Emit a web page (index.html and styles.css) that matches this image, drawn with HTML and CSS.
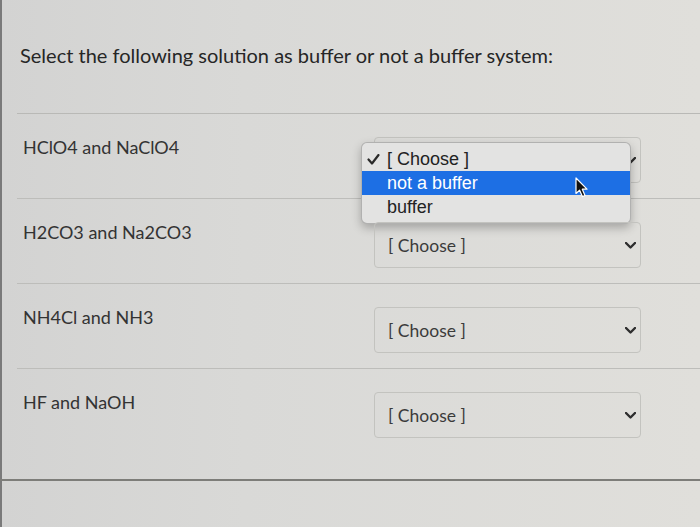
FILE: index.html
```html
<!DOCTYPE html>
<html lang="en">
<head>
  <meta charset="UTF-8" />
  <meta name="viewport" content="width=device-width, initial-scale=1.0" />
  <title>Buffer Systems Quiz</title>
  <link rel="stylesheet" href="styles.css">
</head>
<body>

  <div class="question">
    <h2 class="question-text">Select the following solution as buffer or not a buffer system:</h2>

    <div class="answers">
      <div class="answer-row">
        <span class="answer-label">HClO4 and NaClO4</span>
        <div class="select-wrap open">
          <div class="select-box">
            <span class="select-value">[ Choose ]</span>
            <svg class="chevron" width="11" height="7" viewBox="0 0 11 7"><polyline points="1,1 5.5,5.5 10,1" /></svg>
          </div>

          <!-- open option list for the first select -->
          <ul class="option-menu">
            <li class="option checked">
              <svg class="check" width="13" height="11" viewBox="0 0 13 11"><polyline points="1.5,5.5 5,9.5 11.5,1" /></svg>
              [ Choose ]
            </li>
            <li class="option hover">not a buffer</li>
            <li class="option">buffer</li>
            <svg class="cursor" width="14" height="21" viewBox="0 0 14 21">
              <path d="M1 1 L1 16.5 L4.6 13.2 L7.4 19.6 L10 18.5 L7.3 12.2 L12 12.2 Z" />
            </svg>
          </ul>
        </div>
      </div>

      <div class="answer-row">
        <span class="answer-label">H2CO3 and Na2CO3</span>
        <div class="select-wrap">
          <div class="select-box">
            <span class="select-value">[ Choose ]</span>
            <svg class="chevron" width="11" height="7" viewBox="0 0 11 7"><polyline points="1,1 5.5,5.5 10,1" /></svg>
          </div>
        </div>
      </div>

      <div class="answer-row">
        <span class="answer-label">NH4Cl and NH3</span>
        <div class="select-wrap">
          <div class="select-box">
            <span class="select-value">[ Choose ]</span>
            <svg class="chevron" width="11" height="7" viewBox="0 0 11 7"><polyline points="1,1 5.5,5.5 10,1" /></svg>
          </div>
        </div>
      </div>

      <div class="answer-row last">
        <span class="answer-label">HF and NaOH</span>
        <div class="select-wrap">
          <div class="select-box">
            <span class="select-value">[ Choose ]</span>
            <svg class="chevron" width="11" height="7" viewBox="0 0 11 7"><polyline points="1,1 5.5,5.5 10,1" /></svg>
          </div>
        </div>
      </div>
    </div>

    <div class="question-end"></div>
  </div>

</body>
</html>
```

FILE: styles.css
```css
* {
  margin: 0;
  padding: 0;
  box-sizing: border-box;
}

html, body {
  height: 100%;
}

body {
  font-family: Lato, "Open Sans", sans-serif;
  color: #333;
  background: linear-gradient(90deg, #d3d3d2 0%, #d9d9d7 35%, #e0dfdb 100%);
  overflow: hidden;
}

.question {
  height: 100%;
  border-left: 2px solid #7a7a7a;
}

.question-text {
  font-size: 20px;
  font-weight: normal;
  line-height: 26px;
  color: #262626;
  padding: 42px 0 0 18px;
  height: 113px;
}

.answers {
  margin-left: 15px;
  border-top: 1px solid #b9b9b6;
}

.answer-row {
  display: flex;
  align-items: flex-start;
  height: 85px;
  padding-top: 23px;
  border-bottom: 1px solid #bdbdba;
}

.answer-row.last {
  border-bottom: none;
  height: 110px;
}

.answer-label {
  width: 357px;
  padding-left: 6px;
  font-size: 18px;
  line-height: 20px;
  color: #333;
}

.select-wrap {
  position: relative;
  width: 267px;
}

.select-box {
  height: 46px;
  display: flex;
  align-items: center;
  justify-content: space-between;
  padding: 0 4px 0 13px;
  border: 1px solid #c3c3bf;
  border-radius: 4px;
}

/* the popup covers the current value while open */
.select-wrap.open .select-value {
  visibility: hidden;
}

.select-value {
  font-size: 17.5px;
  color: #3b3b3b;
}

.chevron polyline {
  fill: none;
  stroke: #2e2e2e;
  stroke-width: 2.4;
  stroke-linecap: round;
  stroke-linejoin: round;
}

/* native-looking popup list */
.option-menu {
  position: absolute;
  left: -13px;
  top: 5px;
  width: 270px;
  padding: 4px 0;
  list-style: none;
  background: #e3e3e2;
  border: 1px solid rgba(0, 0, 0, 0.22);
  border-radius: 6px;
  box-shadow: 0 4px 10px rgba(0, 0, 0, 0.25);
  font-family: "Liberation Sans", Arial, sans-serif;
  font-size: 18px;
  color: #222;
}

.option {
  position: relative;
  height: 24px;
  line-height: 24px;
  padding-left: 25px;
}

.option.hover {
  background: #1d6fe4;
  color: #fff;
}

.check {
  position: absolute;
  left: 5px;
  top: 7px;
}

.check polyline {
  fill: none;
  stroke: #2a2a2a;
  stroke-width: 2.2;
  stroke-linecap: round;
  stroke-linejoin: round;
}

.cursor {
  position: absolute;
  left: 213px;
  top: 34px;
}

.cursor path {
  fill: #111;
  stroke: #fff;
  stroke-width: 1.2;
  stroke-linejoin: round;
}

.question-end {
  margin-left: -2px;
  border-top: 2px solid #7d7d79;
}
```
